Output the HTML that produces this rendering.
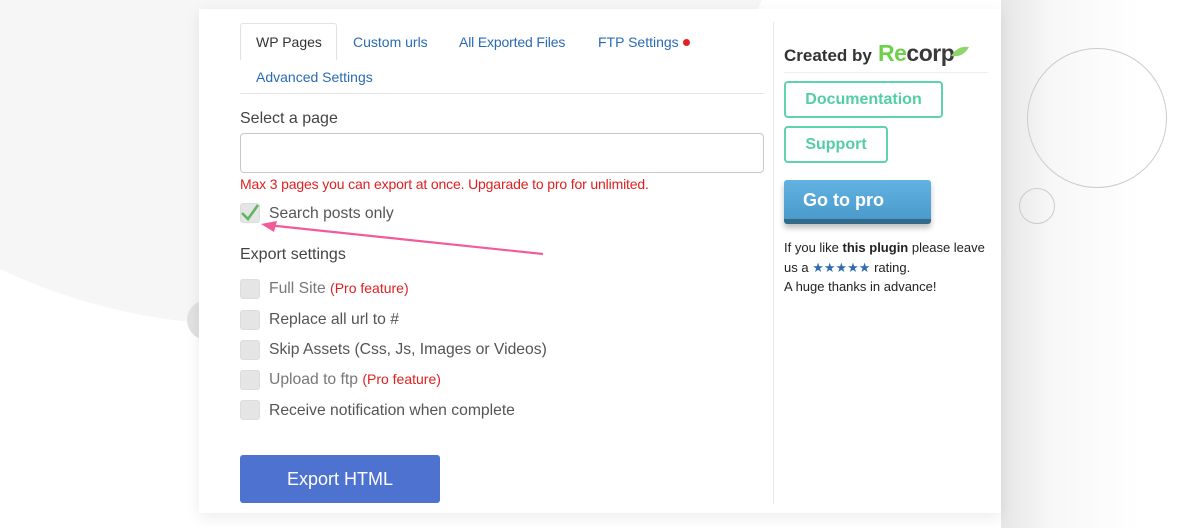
<!DOCTYPE html>
<html><head><meta charset="utf-8"><style>
body{margin:0;width:1200px;height:528px;overflow:hidden;background:#fff;font-family:"Liberation Sans",Arial,sans-serif;position:relative}
.blob{position:absolute;left:-300px;top:-700px;width:1100px;height:1025px;border-radius:50%;background:#f6f6f6}
.dot{position:absolute;left:187px;top:300px;width:40px;height:40px;border-radius:50%;background:#e2e2e2}
.rshade{position:absolute;left:1001px;top:0;width:200px;height:528px;background:linear-gradient(90deg,#e6e6e6,#f7f7f7 25%,#fff 70%)}
.card{position:absolute;left:199px;top:9px;width:802px;height:504px;background:#fff;box-shadow:0 4px 14px rgba(0,0,0,.08)}
.c1{position:absolute;left:1027px;top:48px;width:138px;height:138px;border:1px solid #ccc;border-radius:50%}
.c2{position:absolute;left:1019px;top:188px;width:34px;height:34px;border:1px solid #ccc;border-radius:50%}
.t{position:absolute;font-size:14px;color:#2a6bb5;white-space:nowrap}
.tab1{position:absolute;left:240px;top:23px;width:95px;height:36px;border:1px solid #e2e2e2;border-bottom:none;border-radius:3px 3px 0 0;background:#fff}
.lbl{position:absolute;font-size:16px;color:#444;white-space:nowrap}
.cb{position:absolute;left:240px;width:18px;height:18px;background:#e5e5e5;border:1px solid #ddd;border-radius:3px}
.opt{position:absolute;left:269px;font-size:15.7px;color:#555;white-space:nowrap}
.opt.dim{color:#777}
.red{color:#e02020;font-size:14px}
.btn{position:absolute;border:2px solid #5dd3ae;border-radius:4px;color:#53cda6;font-weight:bold;font-size:16px;text-align:center;box-sizing:border-box}
</style></head><body>
<div class="blob"></div><div class="dot"></div><div class="rshade"></div>
<div class="c1"></div><div class="c2"></div>
<div class="card"></div>
<div class="tab1"></div>
<div class="t" style="left:256px;top:34px;color:#333">WP Pages</div>
<div class="t" style="left:353px;top:34px">Custom urls</div>
<div class="t" style="left:459px;top:34px;letter-spacing:-0.15px">All Exported Files</div>
<div class="t" style="left:598px;top:34px">FTP Settings <span style="display:inline-block;width:7px;height:7px;border-radius:50%;background:#e52020;vertical-align:1px"></span></div>
<div class="t" style="left:256px;top:69px">Advanced Settings</div>
<div style="position:absolute;left:240px;top:93px;width:524px;height:1px;background:#e5e5e5"></div>
<div class="lbl" style="left:240px;top:110px">Select a page</div>
<div style="position:absolute;left:240px;top:133px;width:522px;height:38px;border:1px solid #c8c8c8;border-radius:4px"></div>
<div style="position:absolute;left:240px;top:176px;font-size:14px;color:#e02020;white-space:nowrap;letter-spacing:-0.15px">Max 3 pages you can export at once. Upgarade to pro for unlimited.</div>
<div class="cb" style="top:203px"></div>
<svg style="position:absolute;left:238px;top:200px" width="24" height="24"><path d="M4 13 L10 19 L20 5" fill="none" stroke="#5cb85c" stroke-width="2.6"/></svg>
<div class="opt" style="top:205px">Search posts only</div>
<svg style="position:absolute;left:255px;top:218px" width="300" height="42"><path d="M288 36 L12 7" stroke="#f25b9a" stroke-width="2.2"/><path d="M6 6 L22 3 L19 14 Z" fill="#f25b9a"/></svg>
<div class="lbl" style="left:240px;top:246px">Export settings</div>
<div class="cb" style="top:279px"></div><div class="opt dim" style="top:280px">Full Site <span class="red">(Pro feature)</span></div>
<div class="cb" style="top:310px"></div><div class="opt" style="top:311px">Replace all url to #</div>
<div class="cb" style="top:340px"></div><div class="opt" style="top:341px">Skip Assets (Css, Js, Images or Videos)</div>
<div class="cb" style="top:370px"></div><div class="opt dim" style="top:371px">Upload to ftp <span class="red">(Pro feature)</span></div>
<div class="cb" style="top:400px"></div><div class="opt" style="top:402px">Receive notification when complete</div>
<div style="position:absolute;left:240px;top:455px;width:200px;height:48px;background:#4d72d0;border-radius:3px;color:#fff;font-size:18px;text-align:center;line-height:48px">Export HTML</div>
<div style="position:absolute;left:773px;top:22px;width:1px;height:482px;background:#e8e8e8"></div>
<div style="position:absolute;left:784px;top:46px;font-size:17px;font-weight:bold;color:#333;white-space:nowrap">Created by</div>
<div style="position:absolute;left:878px;top:40px;font-size:23px;font-weight:bold;white-space:nowrap;letter-spacing:-0.5px"><span style="color:#6ed14a">Re</span><span style="color:#3a3a3a">corp</span></div>
<svg style="position:absolute;left:950px;top:44px" width="20" height="16"><path d="M1 12 Q8 1 19 3 Q13 14 1 12Z" fill="#8fd66a"/></svg>
<div style="position:absolute;left:784px;top:72px;width:204px;height:1px;background:#eee"></div>
<div class="btn" style="left:784px;top:81px;width:159px;height:37px;line-height:33px">Documentation</div>
<div class="btn" style="left:784px;top:126px;width:104px;height:37px;line-height:33px">Support</div>
<div style="position:absolute;left:784px;top:180px;width:147px;height:44px;border-radius:3px;background:linear-gradient(#62b3e2,#4a9acb);border-bottom:5px solid #336a8a;box-shadow:0 4px 6px rgba(0,0,0,.25);color:#fff;font-weight:bold;font-size:18px;line-height:40px;padding-left:19px;box-sizing:border-box">Go to pro</div>
<div style="position:absolute;left:784px;top:238px;font-size:13px;color:#222;line-height:19.5px;white-space:nowrap">If you like <b>this plugin</b> please leave<br>us a <span style="color:#2f6bb0">★★★★★</span> rating.<br>A huge thanks in advance!</div>
</body></html>
